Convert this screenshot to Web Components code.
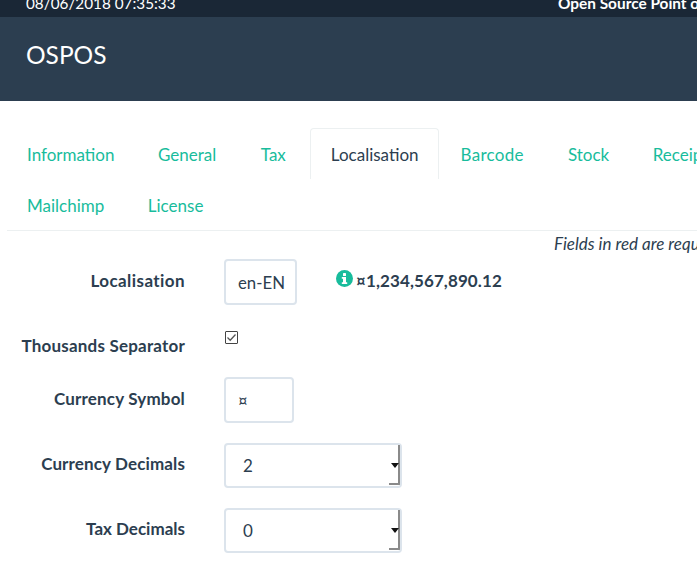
<!DOCTYPE html>
<html><head><meta charset="utf-8">
<style>
html,body{margin:0;padding:0;width:697px;height:568px;overflow:hidden;background:#fff;font-family:Lato,sans-serif;color:#2c3e50}
pos-row.a{margin-top:5px}
pos-row.b{margin-top:25px;height:20px}
pos-row.c{margin-top:27px}
pos-row.d{margin-top:20px}
pos-row.e{margin-top:20px}
</style></head><body>
<pos-topbar><span>08/06/2018 07:35:33</span><span slot="right">Open Source Point of Sale</span></pos-topbar>
<pos-brand>OSPOS</pos-brand>
<pos-tabs></pos-tabs>
<pos-note>Fields in red are required</pos-note>
<pos-row label="Localisation" class="a" top="12" ls=".42"><pos-input value="en-EN" w="73"></pos-input><pos-sample>¤1,234,567,890.12</pos-sample></pos-row>
<pos-row label="Thousands Separator" class="b" top="6" ls=".2"><pos-check></pos-check></pos-row>
<pos-row label="Currency Symbol" class="c" top="12" ls=".18"><pos-input value="¤" w="70"></pos-input></pos-row>
<pos-row label="Currency Decimals" class="d" top="11" ls=".13"><pos-select value="2"></pos-select></pos-row>
<pos-row label="Tax Decimals" class="e" top="11" ls="0"><pos-select value="0"></pos-select></pos-row>
<script>
function def(name,html){customElements.define(name,class extends HTMLElement{connectedCallback(){if(this.shadowRoot)return;const r=this.attachShadow({mode:'open'});r.innerHTML=typeof html==='function'?html(this):html;}});}
def('pos-topbar',`<style>:host{display:flex;height:17px;background:#1a2736;color:#fff;font-size:15.4px;line-height:17px;overflow:hidden;white-space:nowrap;box-sizing:border-box;padding:0 0 0 26px}
.l{margin-top:-5px;font-size:15.3px}.r{margin-left:auto;margin-top:-5px;font-weight:700;width:139px;flex:none}</style>
<div class="l"><slot></slot></div><div class="r"><slot name="right"></slot></div>`);
def('pos-brand',`<style>:host{display:flex;align-items:center;height:84px;padding:0 0 10px 26px;box-sizing:border-box;background:#2c3e50;color:#fff;font-size:24.5px}</style><slot></slot>`);
const tabs=[['Information','first'],['General','gen'],['Tax',''],['Localisation','on'],['Barcode','wide'],['Stock',''],['Receipt','rec'],['Mailchimp',''],['License','lic']];
def('pos-tabs',`<style>:host{display:block;margin:27px 0 0 7px;width:800px;height:103px;box-sizing:border-box;border-bottom:1px solid #ecf0f1;overflow:hidden}
.w{display:flex;flex-wrap:wrap;width:790px}
a{display:block;box-sizing:border-box;height:51px;padding:15px 19px 0;font-size:17px;line-height:22px;color:#18bc9c;border:1px solid transparent;border-bottom:0;margin-right:4px;white-space:nowrap}
a.first{margin-right:3.5px}
a.gen{margin-right:4.6px}
a.on{color:#2c3e50;border-color:#ecf0f1;border-radius:4px 4px 0 0;padding-left:20px;margin-right:2px}
a.wide{letter-spacing:.3px}
a.rec{margin-left:-.5px}
a.lic{margin-left:-.5px}
</style><div class="w">${tabs.map(t=>`<a class="${t[1]}">${t[0]}</a>`).join('')}</div>`);
def('pos-note',`<style>:host{display:block;margin:3px 0 0 554px;width:200px;font-style:italic;font-size:17px;line-height:20px;white-space:nowrap}</style><slot></slot>`);
def('pos-row',h=>`<style>:host{display:flex;box-sizing:border-box;width:697px}
.lab{width:185px;flex:none;text-align:right;font-weight:700;font-size:17px;line-height:20px;white-space:nowrap;box-sizing:border-box}
.c{margin-left:39px;display:flex;align-items:flex-start}
</style><div class="lab" style="padding-top:${h.getAttribute('top')}px;letter-spacing:${h.getAttribute('ls')}px">${h.getAttribute('label')}</div><div class="c"><slot></slot></div>`);
def('pos-input',h=>`<style>:host{display:block;box-sizing:border-box;width:${h.getAttribute('w')}px;height:46px;border:2px solid #dce4ec;border-radius:4px;padding:0 12px;font-size:16.8px;color:#2c3e50;background:#fff;white-space:nowrap}
div{margin-top:-1px;line-height:46px}</style><div>${h.getAttribute('value')}</div>`);
def('pos-sample',`<style>:host{display:flex;align-items:center;margin-left:39px;font-weight:700;font-size:17px;letter-spacing:.1px;line-height:20px;height:20px;margin-top:12px;gap:3px;white-space:nowrap}
svg{width:17px;height:17px;flex:none;margin-top:-6px}</style>
<svg viewBox="0 0 17 17"><circle cx="8.5" cy="8.5" r="8.5" fill="#18bc9c"/><rect x="7" y="3" width="3" height="3" rx=".6" fill="#fff"/><path d="M5.8 7h4.2v5.2h1.2V14H5.8v-1.8H7V8.8H5.8z" fill="#fff"/></svg><span><slot></slot></span>`);
def('pos-check',`<style>:host{display:block;width:13px;height:13px;box-sizing:border-box;margin:1px 0 0 1px;border:1px solid #444;border-radius:1px;background:#fff}
svg{display:block;width:11px;height:11px}</style><svg viewBox="0 0 11 11"><path d="M1.5 5.5L4.2 8.2 9.5 2.5" fill="none" stroke="#555" stroke-width="1.3"/></svg>`);
def('pos-select',h=>`<style>:host{display:block;position:relative;box-sizing:border-box;width:178px;height:45px;border:2px solid #dce4ec;border-radius:4px;padding:0 17px;font-size:17px;font-weight:400;line-height:42px;background:#fff}
.e{position:absolute;right:0;top:0;bottom:1px;width:11px;border-right:2px solid #8a8a8a;border-bottom:2px solid #8a8a8a;box-sizing:border-box;border-radius:0 0 1px 0}
.e i{position:absolute;right:-1px;top:18px;width:0;height:0;border:4px solid transparent;border-top:5px solid #111;border-bottom:0}
</style>${h.getAttribute('value')}<div class="e"><i></i></div>`);
</script>
</body></html>
